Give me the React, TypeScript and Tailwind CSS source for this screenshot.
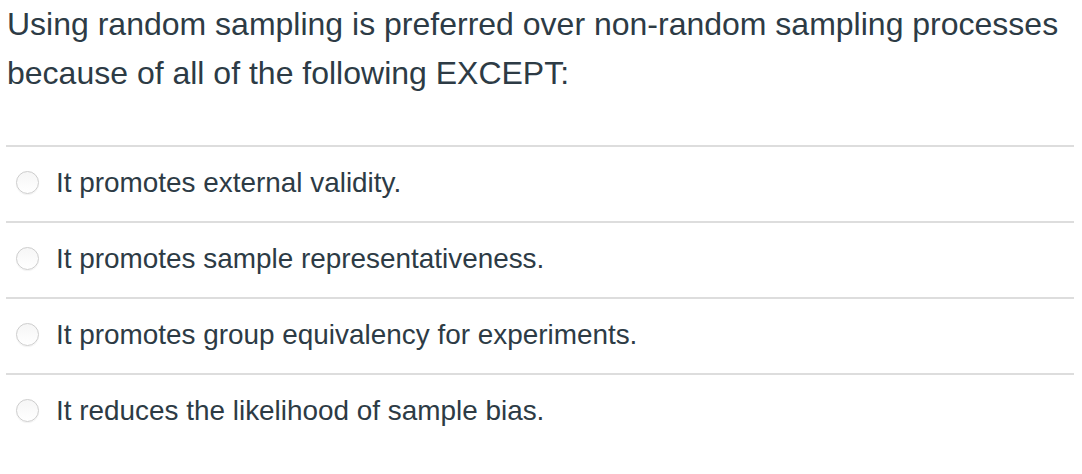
const OPTIONS = [
  'It promotes external validity.',
  'It promotes sample representativeness.',
  'It promotes group equivalency for experiments.',
  'It reduces the likelihood of sample bias.',
];

function Radio() {
  return (
    <span className="inline-block h-[23px] w-[23px] shrink-0 rounded-full border border-[#cdcdcd] bg-gradient-to-b from-[#f6f6f6] to-white shadow-[0_1px_1px_rgba(0,0,0,0.05)]" />
  );
}

export default function App() {
  return (
    <div className="min-h-[474px] w-[1082px] bg-white pl-[6px] pr-[8px] font-['Liberation_Sans',Arial,sans-serif] text-[#2d3b45]">
      {/* Question */}
      <p className="pl-[1px] text-[32px] leading-[49px]">
        Using random sampling is preferred over non-random sampling processes because of all of the following EXCEPT:
      </p>

      {/* Answers */}
      <div className="mt-[47px]">
        {OPTIONS.map((opt) => (
          <label
            key={opt}
            className="flex h-[76px] items-center gap-[17px] border-t-2 border-[#dddddd] pb-[3px] pl-[10px]"
          >
            <Radio />
            <span className="text-[27.9px] leading-none">{opt}</span>
          </label>
        ))}
      </div>
    </div>
  );
}
